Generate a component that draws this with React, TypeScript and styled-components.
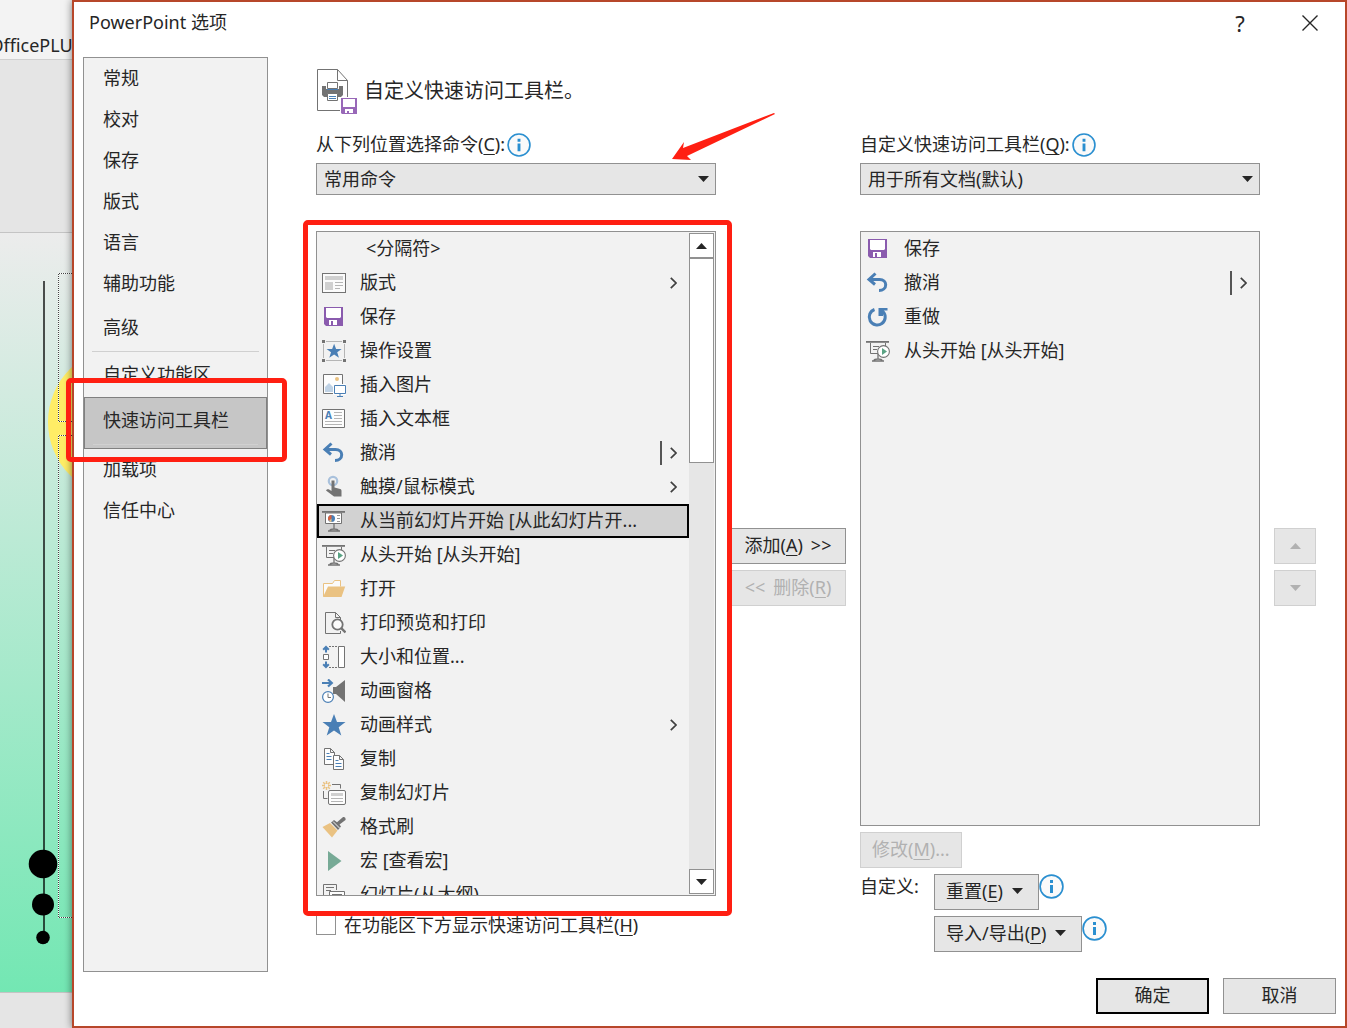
import React from "react";
import styled, { createGlobalStyle, css } from "styled-components";

const color = {
  accent: "#b7472a",
  mark: "#ff1f12",
  text: "#262626",
  muted: "#b1b1b1",
  line: "#919191",
  softLine: "#d0d0d0",
  panel: "#f2f2f2",
  control: "#e6e6e6",
  gray: "#737373",
  blue: "#4a7fb5",
  purple: "#8a5bae",
  gold: "#eac282",
  green: "#77aa96",
};

const GlobalStyle = createGlobalStyle`
  *, *::before, *::after { box-sizing: border-box; }
  body { margin: 0; }
  body, button, select, input {
    font-family: "Noto Sans", "Noto Sans CJK SC", sans-serif;
    font-size: 18px;
    line-height: 24px;
    color: ${color.text};
  }
  svg { display: block; flex: none; }
`;

const Screen = styled.div`
  display: flex;
  height: 100vh;
  min-height: 760px;
  min-width: 1080px;
  overflow: hidden;
`;

/* ---------- application window behind the dialog ---------- */

const Backdrop = styled.div`
  flex: 0 0 72px;
  display: flex;
  flex-direction: column;
  overflow: hidden;
  background: #e5e5e5;
`;

const RibbonTab = styled.div`
  height: 60px;
  padding-top: 33px;
  border-bottom: 1px solid ${color.softLine};
  background: #f3f3f3;
  display: flex;
  justify-content: center;
  white-space: nowrap;
`;

const Ribbon = styled.div`
  height: 173px;
  border-bottom: 1px solid #c4c4c4;
`;

const SlideArea = styled.div`
  flex: 1;
  min-height: 0;
  overflow: hidden;
  background: linear-gradient(#ececec, #73e7b3);
`;

const StatusBar = styled.div`
  height: 36px;
  border-top: 1px solid #c4c4c4;
`;

/* ---------- dialog ---------- */

const Dialog = styled.section`
  position: relative;
  flex: 1;
  min-width: 0;
  display: flex;
  flex-direction: column;
  border: 2px solid ${color.accent};
  background: #fff;
  box-shadow: 0 0 8px rgba(0, 0, 0, 0.5);
`;

const TitleBar = styled.header`
  display: flex;
  align-items: center;
  height: 42px;
  margin-bottom: 13px;
  padding-left: 15px;
`;

const Title = styled.h1`
  flex: 1;
  margin: 0;
  padding-bottom: 2px;
  font-size: 18px;
  font-weight: 400;
`;

const TitleButton = styled.button`
  display: flex;
  align-items: center;
  justify-content: center;
  width: 70px;
  height: 42px;
  padding: 0;
  border: 0;
  background: none;
  font-size: 22px;
`;

const Body = styled.div`
  flex: 1;
  min-height: 0;
  display: flex;
  padding: 0 29px 0 9px;
`;

const Sidebar = styled.nav`
  flex: 0 0 185px;
  border: 1px solid ${color.line};
  background: ${color.panel};
`;

const NavItem = styled.div<{ $size: number; $selected?: boolean }>`
  position: relative;
  display: flex;
  flex-direction: column;
  height: ${(p) => p.$size}px;
  ${(p) =>
    p.$selected &&
    css`
      padding-bottom: 3px;
      border: 1px solid #808080;
      background: #c6c6c6;
    `}
`;

const NavButton = styled.button<{ $selected?: boolean }>`
  flex: 1;
  width: 100%;
  padding: 0 0 2px ${(p) => (p.$selected ? 18 : 19)}px;
  border: 0;
  background: none;
  text-align: left;
`;

const NavRule = styled.div`
  height: 1px;
  margin: 0 8px;
  background: ${color.softLine};
`;

const Highlight = styled.div<{ $inset: string }>`
  position: absolute;
  inset: ${(p) => p.$inset};
  z-index: 2;
  border: 5px solid ${color.mark};
  border-radius: 5px;
  pointer-events: none;
`;

const Main = styled.main`
  flex: 1;
  min-width: 0;
  display: flex;
  flex-direction: column;
  padding: 12px 0 0 48px;
`;

const Heading = styled.div`
  display: flex;
  gap: 6px;
  height: 64px;
  padding-left: 1px;
`;

const HeadingText = styled.h2`
  margin: 0;
  font-size: 20px;
  font-weight: 400;
  line-height: 44px;
`;

const Columns = styled.div`
  flex: 1;
  min-height: 0;
  display: grid;
  grid-template-columns: minmax(0, 1fr) 116px minmax(0, 1fr) 42px;
  gap: 14px;
`;

const Column = styled.div`
  position: relative;
  min-height: 0;
  display: flex;
  flex-direction: column;
`;

const ButtonColumn = styled.div`
  display: flex;
  flex-direction: column;
  justify-content: center;
  gap: 6px;
  padding-top: 29px;
`;

const LabelRow = styled.div`
  display: flex;
  align-items: center;
  gap: 2px;
  height: 24px;
  margin-bottom: 6px;
  white-space: nowrap;
  label {
    padding-bottom: 2px;
  }
`;

const SelectBox = styled.div`
  position: relative;
  margin-bottom: 36px;
`;

const Select = styled.select`
  appearance: none;
  display: block;
  width: 100%;
  height: 32px;
  padding: 0 30px 0 7px;
  border: 1px solid ${color.line};
  border-radius: 0;
  background: ${color.control};
`;

const SelectCaret = styled.span`
  position: absolute;
  right: 7px;
  top: 13px;
  pointer-events: none;
`;

const ListFrame = styled.div`
  position: relative;
  flex: 1;
  min-height: 0;
  display: flex;
  border: 1px solid ${color.line};
  background: ${color.panel};
`;

const List = styled.ul`
  flex: 1;
  min-width: 0;
  margin: 0;
  padding: 0;
  overflow: hidden;
  list-style: none;
`;

const Row = styled.li<{ $selected?: boolean }>`
  display: flex;
  align-items: center;
  height: 34px;
  padding: 0 12px 0 5px;
  ${(p) =>
    p.$selected &&
    css`
      background: #d2d2d2;
      box-shadow: inset 0 0 0 2px #000;
    `}
`;

const RowIcon = styled.span`
  flex: 0 0 24px;
  height: 24px;
  margin-right: 14px;
`;

const RowText = styled.span<{ $indent?: boolean }>`
  flex: 1;
  padding: 0 0 2px ${(p) => (p.$indent ? 6 : 0)}px;
  white-space: nowrap;
`;

const SplitBar = styled.span`
  width: 2px;
  height: 24px;
  margin-right: 8px;
  background: #555;
`;

const Scrollbar = styled.div`
  flex: 0 0 26px;
  display: flex;
  flex-direction: column;
  padding: 1px 1px 1px 0;
  background: ${color.panel};
`;

const ScrollButton = styled.button`
  display: flex;
  align-items: center;
  justify-content: center;
  height: 25px;
  padding: 0;
  border: 1px solid ${color.line};
  background: #fff;
`;

const ScrollTrack = styled.div`
  flex: 1;
  background: ${color.control};
`;

const ScrollThumb = styled.div`
  height: 205px;
  border: 1px solid ${color.line};
  background: #fff;
`;

const Button = styled.button<{ $primary?: boolean; $wide?: boolean }>`
  display: flex;
  align-items: center;
  justify-content: center;
  gap: 8px;
  width: ${(p) => (p.$wide ? "113px" : "auto")};
  height: 36px;
  padding: 0 11px 2px;
  border: ${(p) => (p.$primary ? "2px solid #000" : `1px solid ${color.line}`)};
  background: ${color.control};
  white-space: nowrap;
  &:disabled {
    border-color: ${color.softLine};
    color: ${color.muted};
  }
`;

const MenuButton = styled(Button)`
  gap: 9px;
  padding-right: 15px;
`;

const MoveButton = styled(Button)`
  padding: 0;
`;

const CheckRow = styled.label`
  display: flex;
  align-items: center;
  gap: 8px;
  height: 22px;
  margin: 18px 0 36px;
  white-space: nowrap;
  span {
    margin-bottom: 1px;
  }
`;

const CheckBox = styled.input`
  appearance: none;
  width: 20px;
  height: 20px;
  margin: 0;
  border: 1px solid ${color.line};
  background: #fff;
`;

const Below = styled.div`
  display: grid;
  grid-template-columns: 74px 1fr;
  row-gap: 6px;
  padding: 6px 0 20px;
`;

const BelowWide = styled.div`
  grid-column: 1 / -1;
  display: flex;
`;

const ButtonWithInfo = styled.div`
  grid-column: 2;
  display: flex;
  align-items: flex-start;
`;

const Footer = styled.footer`
  display: flex;
  justify-content: flex-end;
  gap: 14px;
  padding: 6px 9px 12px;
`;

const ArrowMark = styled.svg`
  position: absolute;
  right: -60px;
  top: -22px;
  z-index: 2;
`;

const Key = styled.span`
  text-decoration: underline;
  text-decoration-thickness: 1px;
  text-underline-offset: 3px;
`;

/* ---------- drawings ---------- */

const Caret = ({ up, fill = color.text }: { up?: boolean; fill?: string }) => (
  <svg width="11" height="6" viewBox="0 0 11 6">
    <path d={up ? "M0 6 5.5 0 11 6z" : "M0 0h11L5.5 6z"} fill={fill} />
  </svg>
);

const Chevron = () => (
  <svg width="7" height="12" viewBox="0 0 7 12" fill="none" stroke="#404040" strokeWidth="1.7">
    <path d="M.8.8 6 6 .8 11.2" />
  </svg>
);

const Info = ({ size = 25 }: { size?: number }) => (
  <svg width={size} height={size} viewBox="0 0 25 25" role="img" aria-label="信息">
    <circle cx="12.5" cy="12.5" r="11.4" fill="#fafafa" stroke="#2a8fd0" strokeWidth="1.7" />
    <path d="M11 6h3v3h-3zM11 11h3v8h-3z" fill="#2a8fd0" />
  </svg>
);

const Close = () => (
  <svg width="16" height="16" viewBox="0 0 16 16" fill="none" stroke={color.text} strokeWidth="1.4">
    <path d="M.5.5l15 15M15.5.5l-15 15" />
  </svg>
);

const STAR = "M12 1l3 8h8.5l-6.8 5.2 2.6 8.3-7.3-5-7.3 5 2.6-8.3L.5 9H9z";

const icons: Record<string, React.ReactNode> = {
  layout: (
    <>
      <rect x=".5" y="2.5" width="23" height="19" fill="#fbfbfb" stroke={color.gray} />
      <path d="M3 5h18v4H3zM3 11h8v8H3z" fill="#d0d0d0" />
      <path d="M13 11.5h8M13 14.5h8M13 17.5h5" stroke="#b5b5b5" />
    </>
  ),
  save: (
    <>
      <path d="M2 2h19v19H4l-2-2z" fill={color.purple} />
      <path d="M4 3h15v9l-1 1H5l-1-1zM7 15h8v5h-4v-4H9v4H7z" fill="#fff" />
    </>
  ),
  action: (
    <>
      <path d="M4 2.5h16M4 21.5h16M1.5 5v14M22.5 5v14" stroke="#b5b5b5" />
      <path d="M0 1h3v3H0zM21 1h3v3h-3zM0 20h3v3H0zM21 20h3v3h-3z" fill={color.gray} />
      <path d={STAR} fill={color.blue} transform="translate(4.2 4) scale(.66)" />
    </>
  ),
  picture: (
    <>
      <path d="M1.5 1.5h19v19h-19z" fill="#fdfdfd" stroke={color.gray} />
      <circle cx="15" cy="6" r="2" fill={color.gold} />
      <path d="M3 19v-5l4-4 4 4v5z" fill="#bfd2e5" />
      <path d="M11 11h14v11H11z" fill="#fdfdfd" />
      <path d="M12.5 12.5h11v8h-11zM18 20.5V23M15 23.5h6" fill="#fff" stroke={color.blue} />
    </>
  ),
  textbox: (
    <>
      <path d="M.5 2.5h22v18H.5z" fill="#fdfdfd" stroke={color.gray} />
      <text x="3" y="12" fill={color.blue} fontSize="10" fontWeight="700">A</text>
      <path d="M12 5.5h8M12 8.5h8M12 11.5h8M3 14.5h17M3 17.5h17" stroke="#b5b5b5" />
    </>
  ),
  undo: (
    <g fill="none" stroke={color.blue} strokeWidth="3">
      <path d="M3 8.5h10.5c4 0 6.2 2.300 6.200 5.200 0 3.500-2.700 5.800-6.700 5.800" />
      <path d="M9.500 2.500 3 8.500l6 5" />
    </g>
  ),
  touch: (
    <>
      <circle cx="11" cy="6" r="4.200" fill="none" stroke="#a9c1dc" strokeWidth="2.200" />
      <path d="M9.500 5.500h3v7l5.700 1.500c1 .3 1.300 1 1.300 2v5.500h-7.500L4 15.500c.8-1.500 2.200-1.500 3.500-.8l2 1.300z" fill={color.gray} />
    </>
  ),
  current: (
    <>
      <path d="M3.500 4h16v10.500h-16z" fill="#fff" stroke={color.gray} />
      <path d="M0 2h23v1.800H0z" fill={color.gray} />
      <path d="M12 15v5M8 21.500c.5-2 7.500-2 8 0M6 22h12" fill="none" stroke={color.gray} strokeWidth="1.300" />
      <circle cx="9.500" cy="9.500" r="3.500" fill={color.blue} />
      <path d="M9.500 9.500V6a3.500 3.500 0 0 0-2.500 6z" fill="#d8603c" />
      <path d="M9.500 9.500 7 12a3.500 3.500 0 0 0 2.500 1z" fill={color.gold} />
      <path d="M15 6.500h3M15 9.500h3M15 12.500h3" stroke="#999" />
    </>
  ),
  start: (
    <>
      <path d="M4.500 4v10.500H12M19.500 4v3M7 7.500h6M7 10.500h4" fill="none" stroke={color.gray} />
      <path d="M0 2h23v1.800H0z" fill={color.gray} />
      <path d="M12 15v5M8 21.500c.5-2 7.500-2 8 0M6 22h12" fill="none" stroke={color.gray} strokeWidth="1.300" />
      <circle cx="17.500" cy="12.500" r="5.900" fill="#fff" stroke={color.gray} strokeWidth="1.100" />
      <path d="M16 9l5 3.500-5 3.500z" fill="#5aa384" />
    </>
  ),
  open: (
    <>
      <path d="M1.500 19.500v-13h9l2-3h6v6" fill="#fbfbfb" stroke={color.gold} />
      <path d="M6 9.500h17.200L19.500 20H1z" fill={color.gold} />
    </>
  ),
  preview: (
    <>
      <path d="M13.500 1.500h-10v21h15V20M13.500 1.500l5 5v3M13.500 1.500v5h5" fill="none" stroke={color.gray} />
      <circle cx="15.500" cy="13.500" r="5.200" fill="#fbfbfb" stroke={color.gray} strokeWidth="1.800" />
      <path d="M19.200 17.200 23.500 21.500" stroke={color.gray} strokeWidth="2.400" />
    </>
  ),
  size: (
    <>
      <path d="M4 1.500v6M4 16.500v6M1.200 4.800 4 2l2.800 2.800M1.200 19.200 4 22l2.800-2.800" fill="none" stroke={color.blue} strokeWidth="2" />
      <path d="M1.500 9.500h5v5h-5zM16.500 1.500h6v21h-6z" fill="#fff" stroke={color.gray} />
      <path d="M7 1.500h9M7 22.500h9" stroke={color.gray} strokeDasharray="2 1" />
    </>
  ),
  animPane: (
    <>
      <path d="M0 4h10M6 .5 9.800 4 6 7.500" fill="none" stroke={color.blue} strokeWidth="2.200" />
      <circle cx="6" cy="18" r="5.400" fill="#fff" stroke={color.blue} strokeWidth="1.200" />
      <path d="M6 14.500v4h3" fill="none" stroke={color.gray} />
      <path d="M11 8h3l9-7v22l-9-8h-3z" fill={color.gray} />
    </>
  ),
  star: <path d={STAR} fill={color.blue} />,
  copy: (
    <>
      <path d="M2.500 1.500h6l4 4v12h-10zM8.500 1.500v4h4" fill="#fdfdfd" stroke={color.gray} />
      <path d="M4.500 6.500h3M4.500 9.500h5M4.500 12.500h5" stroke={color.blue} />
      <path d="M11.500 8.500h6l4 4v10h-10zM17.500 8.500v4h4" fill="#fdfdfd" stroke={color.gray} />
      <path d="M13.500 13.500h3M13.500 16.500h6M13.500 19.500h6" stroke={color.blue} />
    </>
  ),
  copySlide: (
    <>
      <path d="M4.500 0v3M4.500 6v3M0 4.500h3M6 4.500h3M1.200 1.200l2 2M5.800 5.800l2 2M7.800 1.200l-2 2M3.200 5.800l-2 2" stroke={color.gold} strokeWidth="1.500" />
      <path d="M10 3.500h8.500v4M1.500 10v7.500h4" fill="none" stroke={color.gray} />
      <rect x="6.500" y="9.500" width="17" height="14" rx="1.500" fill="#fdfdfd" stroke={color.gray} />
      <path d="M9 12h12v3H9z" fill="#d0d0d0" />
      <path d="M9 17.500h12M9 20.500h12" stroke="#b5b5b5" />
    </>
  ),
  brush: (
    <>
      <path d="M.5 12 8 8l7.500 7.500L10 22.500z" fill={color.gold} />
      <path d="M9 7.500l7 7.500 3-3.500-1.500-2L23.500 5c.6-2.500-1.500-3.500-3-2.500L15 7.200 12 5z" fill={color.gray} />
      <path d="M11 6.500l6.500 6.500" stroke={color.panel} />
    </>
  ),
  macro: <path d="M6 2l13.500 10L6 22z" fill={color.green} />,
  outline: (
    <>
      <path d="M1.500 20V1.500h13V7M4 4.500h8M4 7.500h5" fill="none" stroke={color.gray} />
      <path d="M7.500 22V8.500h15V22M10 11.500h10" fill="#fdfdfd" stroke={color.gray} />
    </>
  ),
  redo: (
    <>
      <path d="M8.500 4.500a8 8 0 1 0 8.500 2" fill="none" stroke={color.blue} strokeWidth="3" />
      <path d="M12.500 3h9v2.500h-3.500l-1 5.500h-4.500z" fill={color.blue} />
    </>
  ),
};

const Icon = ({ name }: { name: string }) => (
  <svg width="24" height="24" viewBox="0 0 24 24" aria-hidden="true">
    {icons[name]}
  </svg>
);

const HeadingIcon = () => (
  <svg width="41" height="46" viewBox="0 0 41 46" aria-hidden="true">
    <path d="M.5.5h20l10 11v30H.5z" fill="#fff" stroke={color.gray} />
    <path d="M20.500.5v11h10" fill="none" stroke={color.gray} />
    <path d="M5 17h4v3h13v-3h4v9l-2 2H7l-2-2z" fill={color.gray} />
    <path d="M10.500 13.500h10v6h-10zM10.500 24.500h10v7h-10z" fill="#fff" stroke={color.gray} />
    <path d="M10 20.500h11M12 27.500h7M12 29.500h7" stroke={color.blue} />
    <path d="M23 28h18v18H23z" fill="#fff" />
    <path d="M24 29h16v16H25l-1-1z" fill="#9868b8" />
    <path d="M26 30h12v8H26zM28 40h8v4h-4v-2h-2v2h-2z" fill="#fff" />
  </svg>
);

const SlideDrawing = () => (
  <svg width="72" height="758" viewBox="0 0 72 758" aria-hidden="true">
    <circle cx="123" cy="189" r="75" fill="#ffed66" />
    <path d="M44 48v656" stroke="#000" strokeOpacity=".68" strokeWidth="2" />
    <circle cx="43" cy="631" r="14.300" />
    <circle cx="43" cy="671.500" r="11" />
    <circle cx="43" cy="704.500" r="6.800" />
    <g fill="none" stroke="#fff">
      <path d="M72 40.500H58.500v148H72M72 202.500H58.500v482H72" />
      <path d="M72 40.500H58.500v148H72M72 202.500H58.500v482H72" stroke="#444" strokeDasharray="1 1" />
    </g>
  </svg>
);

/* ---------- data ---------- */

type Command = { icon?: string; text: string; menu?: boolean; split?: boolean; selected?: boolean };

const commands: Command[] = [
  { text: "<分隔符>" },
  { icon: "layout", text: "版式", menu: true },
  { icon: "save", text: "保存" },
  { icon: "action", text: "操作设置" },
  { icon: "picture", text: "插入图片" },
  { icon: "textbox", text: "插入文本框" },
  { icon: "undo", text: "撤消", menu: true, split: true },
  { icon: "touch", text: "触摸/鼠标模式", menu: true },
  { icon: "current", text: "从当前幻灯片开始 [从此幻灯片开...", selected: true },
  { icon: "start", text: "从头开始 [从头开始]" },
  { icon: "open", text: "打开" },
  { icon: "preview", text: "打印预览和打印" },
  { icon: "size", text: "大小和位置..." },
  { icon: "animPane", text: "动画窗格" },
  { icon: "star", text: "动画样式", menu: true },
  { icon: "copy", text: "复制" },
  { icon: "copySlide", text: "复制幻灯片" },
  { icon: "brush", text: "格式刷" },
  { icon: "macro", text: "宏 [查看宏]" },
  { icon: "outline", text: "幻灯片(从大纲)" },
];

const toolbar: Command[] = [
  { icon: "save", text: "保存" },
  { icon: "undo", text: "撤消", menu: true, split: true },
  { icon: "redo", text: "重做" },
  { icon: "start", text: "从头开始 [从头开始]" },
];

const sections = [
  { text: "常规", size: 41 },
  { text: "校对", size: 41 },
  { text: "保存", size: 41 },
  { text: "版式", size: 41 },
  { text: "语言", size: 41 },
  { text: "辅助功能", size: 41 },
  { text: "高级", size: 48, rule: true },
  { text: "自定义功能区", size: 45 },
  { text: "快速访问工具栏", size: 52, rule: true, selected: true },
  { text: "加载项", size: 41 },
  { text: "信任中心", size: 41 },
];

const CommandList = ({ items, label }: { items: Command[]; label: string }) => (
  <List role="listbox" aria-label={label}>
    {items.map((c) => (
      <Row key={c.text} role="option" aria-selected={!!c.selected} $selected={c.selected}>
        <RowIcon>{c.icon && <Icon name={c.icon} />}</RowIcon>
        <RowText $indent={!c.icon}>{c.text}</RowText>
        {c.split && <SplitBar />}
        {c.menu && <Chevron />}
      </Row>
    ))}
  </List>
);

export default function App() {
  return (
    <>
      <GlobalStyle />
      <Screen>
        <Backdrop>
          <RibbonTab>OfficePLUS</RibbonTab>
          <Ribbon />
          <SlideArea>
            <SlideDrawing />
          </SlideArea>
          <StatusBar />
        </Backdrop>

        <Dialog role="dialog" aria-labelledby="dialog-title">
          <TitleBar>
            <Title id="dialog-title">PowerPoint 选项</Title>
            <TitleButton aria-label="帮助">?</TitleButton>
            <TitleButton aria-label="关闭">
              <Close />
            </TitleButton>
          </TitleBar>

          <Body>
            <Sidebar>
              {sections.map((s) => (
                <NavItem key={s.text} $size={s.size} $selected={s.selected}>
                  <NavButton $selected={s.selected}>{s.text}</NavButton>
                  {s.rule && <NavRule />}
                  {s.selected && <Highlight $inset="-20px -21px -14px -19px" />}
                </NavItem>
              ))}
            </Sidebar>

            <Main>
              <Heading>
                <HeadingIcon />
                <HeadingText>自定义快速访问工具栏。</HeadingText>
              </Heading>

              <Columns>
                <Column>
                  <ArrowMark width="106" height="50" viewBox="0 0 106 50" aria-hidden="true">
                    <path d="M2 48 14 31l-1 6L104 2l1 1L17 45l4 4z" fill={color.mark} />
                  </ArrowMark>
                  <LabelRow>
                    <label htmlFor="source">
                      从下列位置选择命令(<Key>C</Key>):
                    </label>
                    <Info size={24} />
                  </LabelRow>
                  <SelectBox>
                    <Select id="source">
                      <option>常用命令</option>
                    </Select>
                    <SelectCaret>
                      <Caret />
                    </SelectCaret>
                  </SelectBox>
                  <ListFrame>
                    <CommandList items={commands} label="命令" />
                    <Scrollbar>
                      <ScrollButton aria-label="向上滚动">
                        <Caret up />
                      </ScrollButton>
                      <ScrollTrack>
                        <ScrollThumb />
                      </ScrollTrack>
                      <ScrollButton aria-label="向下滚动">
                        <Caret />
                      </ScrollButton>
                    </Scrollbar>
                    <Highlight $inset="-12px -17px -21px -14px" />
                  </ListFrame>
                  <CheckRow>
                    <CheckBox type="checkbox" />
                    <span>
                      在功能区下方显示快速访问工具栏(<Key>H</Key>)
                    </span>
                  </CheckRow>
                </Column>

                <ButtonColumn>
                  <Button>
                    <span>
                      添加(<Key>A</Key>)
                    </span>
                    <span>&gt;&gt;</span>
                  </Button>
                  <Button disabled>
                    <span>&lt;&lt;</span>
                    <span>
                      删除(<Key>R</Key>)
                    </span>
                  </Button>
                </ButtonColumn>

                <Column>
                  <LabelRow>
                    <label htmlFor="target">
                      自定义快速访问工具栏(<Key>Q</Key>):
                    </label>
                    <Info size={24} />
                  </LabelRow>
                  <SelectBox>
                    <Select id="target">
                      <option>用于所有文档(默认)</option>
                    </Select>
                    <SelectCaret>
                      <Caret />
                    </SelectCaret>
                  </SelectBox>
                  <ListFrame>
                    <CommandList items={toolbar} label="快速访问工具栏" />
                  </ListFrame>
                  <Below>
                    <BelowWide>
                      <Button disabled>
                        <span>
                          修改(<Key>M</Key>)...
                        </span>
                      </Button>
                    </BelowWide>
                    <span>自定义:</span>
                    <ButtonWithInfo>
                      <MenuButton>
                        <span>
                          重置(<Key>E</Key>)
                        </span>
                        <Caret />
                      </MenuButton>
                      <Info />
                    </ButtonWithInfo>
                    <ButtonWithInfo>
                      <MenuButton>
                        <span>
                          导入/导出(<Key>P</Key>)
                        </span>
                        <Caret />
                      </MenuButton>
                      <Info />
                    </ButtonWithInfo>
                  </Below>
                </Column>

                <ButtonColumn>
                  <MoveButton disabled aria-label="上移">
                    <Caret up fill={color.muted} />
                  </MoveButton>
                  <MoveButton disabled aria-label="下移">
                    <Caret fill={color.muted} />
                  </MoveButton>
                </ButtonColumn>
              </Columns>
            </Main>
          </Body>

          <Footer>
            <Button $primary $wide>
              确定
            </Button>
            <Button $wide>取消</Button>
          </Footer>
        </Dialog>
      </Screen>
    </>
  );
}
